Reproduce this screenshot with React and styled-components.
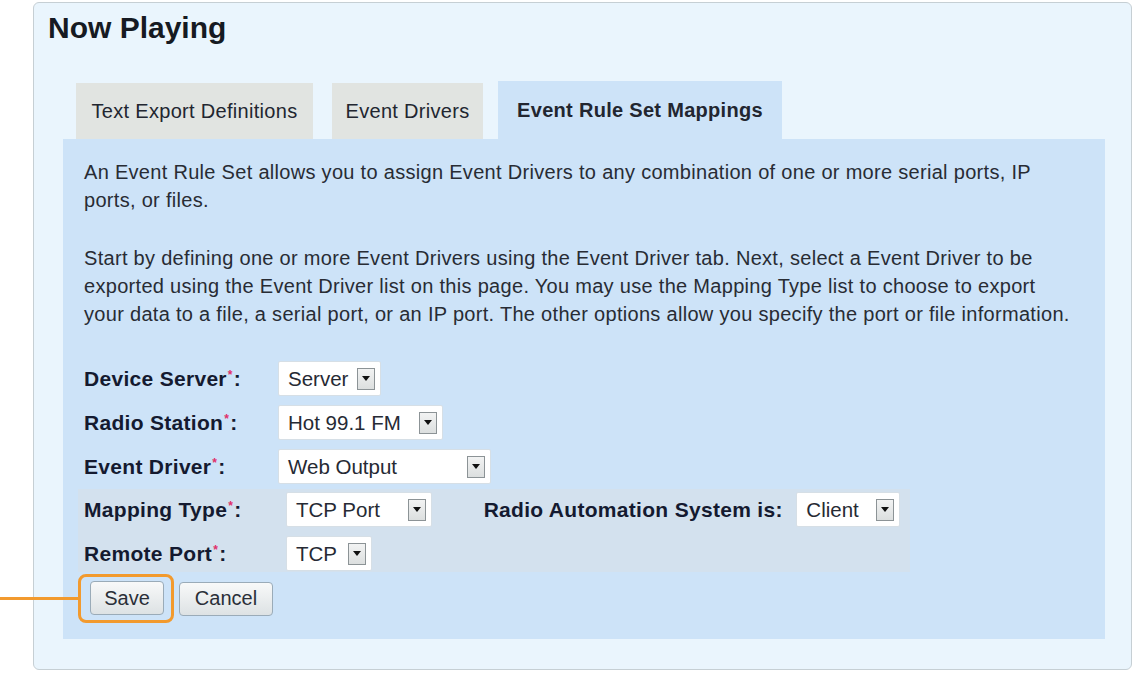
import styled, { createGlobalStyle } from "styled-components";

const GlobalStyle = createGlobalStyle`
  body {
    margin: 0;
    background: #ffffff;
    font-family: "Liberation Sans", Arial, sans-serif;
  }
`;

const Page = styled.div`
  padding: 2px 5px 5px 33px;
`;

const Panel = styled.div`
  width: 1099px;
  height: 668px;
  box-sizing: border-box;
  border: 1px solid #c6cfd4;
  border-radius: 6px;
  background: #eaf5fd;
  padding: 5px 26px 0 29px;
`;

const Title = styled.h1`
  margin: 0 0 0 -15px;
  font-size: 30px;
  line-height: 40px;
  font-weight: bold;
  color: #161a22;
`;

const TabBar = styled.div`
  display: flex;
  align-items: flex-end;
  margin: 33px 0 0 13px;
`;

const Tab = styled.div`
  width: ${(p) => p.$width}px;
  margin-right: ${(p) => p.$gap || 0}px;
  height: ${(p) => (p.$active ? "58px" : "56px")};
  display: flex;
  align-items: center;
  justify-content: center;
  background: ${(p) => (p.$active ? "#cde3f8" : "#e1e4e1")};
  font-size: 20px;
  letter-spacing: 0.3px;
  font-weight: ${(p) => (p.$active ? "bold" : "normal")};
  color: #222630;
`;

const Content = styled.div`
  height: 500px;
  box-sizing: border-box;
  background: #cde3f8;
  padding: 19px 21px 0 21px;
  color: #282c34;
`;

const Para = styled.p`
  margin: 0 0 30px;
  font-size: 20px;
  letter-spacing: 0.3px;
  line-height: 28px;
  white-space: nowrap;
`;

const FormGrid = styled.div`
  display: grid;
  grid-template-columns: 194px auto;
  row-gap: 9px;
  align-items: center;
  justify-items: start;
  margin-top: 33px;
`;

const MappingBox = styled.div`
  display: grid;
  grid-template-columns: 202px auto auto auto;
  row-gap: 9px;
  align-items: center;
  justify-items: start;
  width: 832px;
  box-sizing: border-box;
  margin: 5px 0 0 -6px;
  padding: 3px 0 1px 6px;
  background: #d3e1ee;
`;

const Label = styled.span`
  font-size: 21px;
  font-weight: bold;
  letter-spacing: 0.3px;
  color: #141a30;
  margin-left: ${(p) => p.$indent || 0}px;
`;

const Star = styled.span`
  color: #e0306a;
  font-size: 12px;
  margin: 0 1px 0 1px;
  vertical-align: 7px;
`;

const SelectBox = styled.div`
  display: flex;
  align-items: center;
  justify-content: space-between;
  width: ${(p) => p.$width}px;
  height: 35px;
  box-sizing: border-box;
  padding: 0 5px 0 9px;
  background: #ffffff;
  border: 1px solid #d6dfe6;
  border-radius: 2px;
  font-size: 20.5px;
  color: #262a34;
  margin-left: ${(p) => p.$indent || 0}px;
`;

const DropButton = styled.span`
  flex-shrink: 0;
  width: 18px;
  height: 22px;
  box-sizing: border-box;
  border: 1px solid #8c9396;
  background: linear-gradient(#f2f3f3, #dcdfdf);
  display: flex;
  align-items: center;
  justify-content: center;
  margin-left: 4px;

  &::after {
    content: "";
    border-left: 4px solid transparent;
    border-right: 4px solid transparent;
    border-top: 5px solid #111;
  }
`;

const ButtonRow = styled.div`
  display: flex;
  align-items: center;
  gap: 5px;
  margin-top: 2px;
`;

const Highlight = styled.div`
  position: relative;
  padding: 4px 7px 5px 9px;
  margin-left: -6px;
  border: 3px solid #f29a2e;
  border-radius: 8px;

  &::before {
    content: "";
    position: absolute;
    left: -81px;
    top: 20px;
    width: 78px;
    height: 3px;
    background: #f29a2e;
  }
`;

const Button = styled.button`
  width: ${(p) => p.$width}px;
  height: 34px;
  padding: 0;
  font-family: "Liberation Sans", Arial, sans-serif;
  font-size: 20px;
  color: #2a2f38;
  background: linear-gradient(#f8f9f9, #dde2e4);
  border: 1px solid #9aabb8;
  border-radius: 4px;
`;

function Select({ value, width, indent }) {
  return (
    <SelectBox $width={width} $indent={indent}>
      <span>{value}</span>
      <DropButton />
    </SelectBox>
  );
}

function FieldLabel({ children, required = true, indent }) {
  return (
    <Label $indent={indent}>
      {children}
      {required && <Star>*</Star>}:
    </Label>
  );
}

export default function App() {
  return (
    <>
      <GlobalStyle />
      <Page>
        <Panel>
          <Title>Now Playing</Title>
          <TabBar>
            <Tab $width={237} $gap={19}>
              Text Export Definitions
            </Tab>
            <Tab $width={151} $gap={15}>
              Event Drivers
            </Tab>
            <Tab $width={284} $active>
              Event Rule Set Mappings
            </Tab>
          </TabBar>
          <Content>
            <Para>
              An Event Rule Set allows you to assign Event Drivers to any
              combination of one or more serial ports, IP
              <br />
              ports, or files.
            </Para>
            <Para>
              Start by defining one or more Event Drivers using the Event
              Driver tab. Next, select a Event Driver to be
              <br />
              exported using the Event Driver list on this page. You may use
              the Mapping Type list to choose to export
              <br />
              your data to a file, a serial port, or an IP port. The other
              options allow you specify the port or file information.
            </Para>
            <FormGrid>
              <FieldLabel>Device Server</FieldLabel>
              <Select value="Server" width={103} />
              <FieldLabel>Radio Station</FieldLabel>
              <Select value="Hot 99.1 FM" width={165} />
              <FieldLabel>Event Driver</FieldLabel>
              <Select value="Web Output" width={213} />
            </FormGrid>
            <MappingBox>
              <FieldLabel>Mapping Type</FieldLabel>
              <Select value="TCP Port" width={146} />
              <Label $indent={42}>Radio Automation System is:</Label>
              <Select value="Client" width={104} indent={4} />
              <FieldLabel>Remote Port</FieldLabel>
              <Select value="TCP" width={86} />
            </MappingBox>
            <ButtonRow>
              <Highlight>
                <Button $width={74}>Save</Button>
              </Highlight>
              <Button $width={94}>Cancel</Button>
            </ButtonRow>
          </Content>
        </Panel>
      </Page>
    </>
  );
}
